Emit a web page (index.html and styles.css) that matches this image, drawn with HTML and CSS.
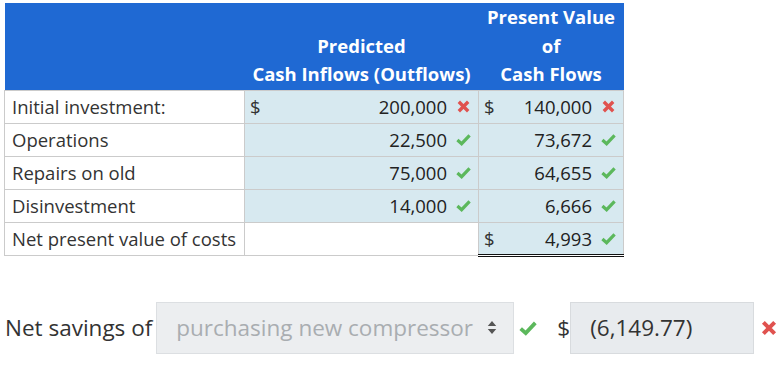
FILE: index.html
```html
<!DOCTYPE html>
<html>
<head>
<meta charset="utf-8">
<link rel="stylesheet" href="styles.css">
</head>
<body>
<div class="page">
  <table class="grid">
    <colgroup><col class="c1"><col class="c2"><col class="c3"></colgroup>
    <thead>
      <tr>
        <th class="hblank"></th>
        <th>Predicted<br>Cash Inflows (Outflows)</th>
        <th>Present Value<br>of<br>Cash Flows</th>
      </tr>
    </thead>
    <tbody>
      <tr>
        <td class="lbl">Initial investment:</td>
        <td class="val"><div class="cell"><span class="cur">$</span><span class="num">200,000</span><svg class="ico" viewBox="0 0 16 16"><path d="M3 3 L13 13 M13 3 L3 13" stroke="#e0524f" stroke-width="3.6" stroke-linecap="butt"/></svg></div></td>
        <td class="val"><div class="cell"><span class="cur">$</span><span class="num">140,000</span><svg class="ico" viewBox="0 0 16 16"><path d="M3 3 L13 13 M13 3 L3 13" stroke="#e0524f" stroke-width="3.6" stroke-linecap="butt"/></svg></div></td>
      </tr>
      <tr>
        <td class="lbl">Operations</td>
        <td class="val"><div class="cell"><span class="num">22,500</span><svg class="ico" viewBox="0 0 16 16"><path d="M1.5 8.5 L6 12.5 L14.5 3.5" fill="none" stroke="#5cb85c" stroke-width="3.4"/></svg></div></td>
        <td class="val"><div class="cell"><span class="num">73,672</span><svg class="ico" viewBox="0 0 16 16"><path d="M1.5 8.5 L6 12.5 L14.5 3.5" fill="none" stroke="#5cb85c" stroke-width="3.4"/></svg></div></td>
      </tr>
      <tr>
        <td class="lbl">Repairs on old</td>
        <td class="val"><div class="cell"><span class="num">75,000</span><svg class="ico" viewBox="0 0 16 16"><path d="M1.5 8.5 L6 12.5 L14.5 3.5" fill="none" stroke="#5cb85c" stroke-width="3.4"/></svg></div></td>
        <td class="val"><div class="cell"><span class="num">64,655</span><svg class="ico" viewBox="0 0 16 16"><path d="M1.5 8.5 L6 12.5 L14.5 3.5" fill="none" stroke="#5cb85c" stroke-width="3.4"/></svg></div></td>
      </tr>
      <tr>
        <td class="lbl">Disinvestment</td>
        <td class="val"><div class="cell"><span class="num">14,000</span><svg class="ico" viewBox="0 0 16 16"><path d="M1.5 8.5 L6 12.5 L14.5 3.5" fill="none" stroke="#5cb85c" stroke-width="3.4"/></svg></div></td>
        <td class="val"><div class="cell"><span class="num">6,666</span><svg class="ico" viewBox="0 0 16 16"><path d="M1.5 8.5 L6 12.5 L14.5 3.5" fill="none" stroke="#5cb85c" stroke-width="3.4"/></svg></div></td>
      </tr>
      <tr>
        <td class="lbl">Net present value of costs</td>
        <td class="empty"></td>
        <td class="val total"><div class="cell"><span class="cur">$</span><span class="num">4,993</span><svg class="ico" viewBox="0 0 16 16"><path d="M1.5 8.5 L6 12.5 L14.5 3.5" fill="none" stroke="#5cb85c" stroke-width="3.4"/></svg></div></td>
      </tr>
    </tbody>
  </table>

  <div class="savings">
    <span class="slabel">Net savings of</span>
    <div class="select"><span>purchasing new compressor</span><svg class="updown" viewBox="0 0 10 16"><path d="M5 1 L9.5 6.5 H0.5 Z M5 15 L9.5 9.5 H0.5 Z" fill="#555"/></svg></div>
    <svg class="ico big" viewBox="0 0 16 16"><path d="M1.5 8.5 L6 12.5 L14.5 3.5" fill="none" stroke="#5cb85c" stroke-width="3.4"/></svg>
    <span class="dollar">$</span>
    <div class="input">(6,149.77)</div>
    <svg class="ico big xmark" viewBox="0 0 16 16"><path d="M3 3 L13 13 M13 3 L3 13" stroke="#e0524f" stroke-width="3.6"/></svg>
  </div>
</div>
</body>
</html>
```

FILE: styles.css
```css
html, body {
  margin: 0;
  padding: 0;
  background: #fff;
}
body {
  font-family: "Open Sans", "Noto Sans", sans-serif;
  color: #222;
}
.page {
  padding: 3px 0 0 4px;
}
.grid {
  border-collapse: collapse;
  table-layout: fixed;
  width: 619px;
  font-size: 18.5px;
}
.c1 { width: 240px; }
.c2 { width: 234px; }
.c3 { width: 145px; }
thead th {
  background: #1f69d3;
  color: #fff;
  font-weight: 700;
  font-size: 18.5px;
  line-height: 28.5px;
  height: 87px;
  padding: 0 0 1px;
  vertical-align: bottom;
  text-align: center;
  box-sizing: border-box;
}
tbody td {
  height: 33px;
  padding: 0;
  border: 1px solid #cbcbcb;
  box-sizing: border-box;
}
.lbl {
  padding-left: 7px;
  color: #333;
}
.val {
  background: #d7e9f0;
}
.empty {
  background: #fff;
}
.cell {
  display: flex;
  align-items: center;
  padding: 0 7px 0 5px;
}
.cur {
  color: #333;
}
.num {
  margin-left: auto;
  color: #222;
}
.ico {
  width: 15px;
  height: 15px;
  margin-left: 9px;
  flex: none;
}
.total {
  border-top: 1px solid #111;
  border-bottom: 3px double #111;
}
.savings {
  display: flex;
  align-items: center;
  margin-top: 45px;
  font-size: 22.5px;
  margin-left: 1px;
  white-space: nowrap;
}
.savings > * {
  flex: none;
}
.slabel {
  color: #333;
  margin-right: 4px;
}
.select {
  width: 358px;
  height: 52px;
  box-sizing: border-box;
  background: #eceef0;
  border: 1px solid #dcdfe2;
  display: flex;
  align-items: center;
  padding: 0 16px 0 19px;
  color: #a9adb1;
}
.select span {
  flex: 1;
}
.updown {
  width: 10px;
  height: 15px;
}
.ico.big {
  width: 18px;
  height: 18px;
  margin-left: 5px;
}
.dollar {
  margin-left: 20px;
  color: #333;
}
.input {
  width: 184px;
  height: 52px;
  box-sizing: border-box;
  background: #e8ebee;
  border: 1px solid #d8dbde;
  display: flex;
  align-items: center;
  padding-left: 19px;
  color: #333;
}
.xmark {
  margin-left: 6px !important;
}
```
